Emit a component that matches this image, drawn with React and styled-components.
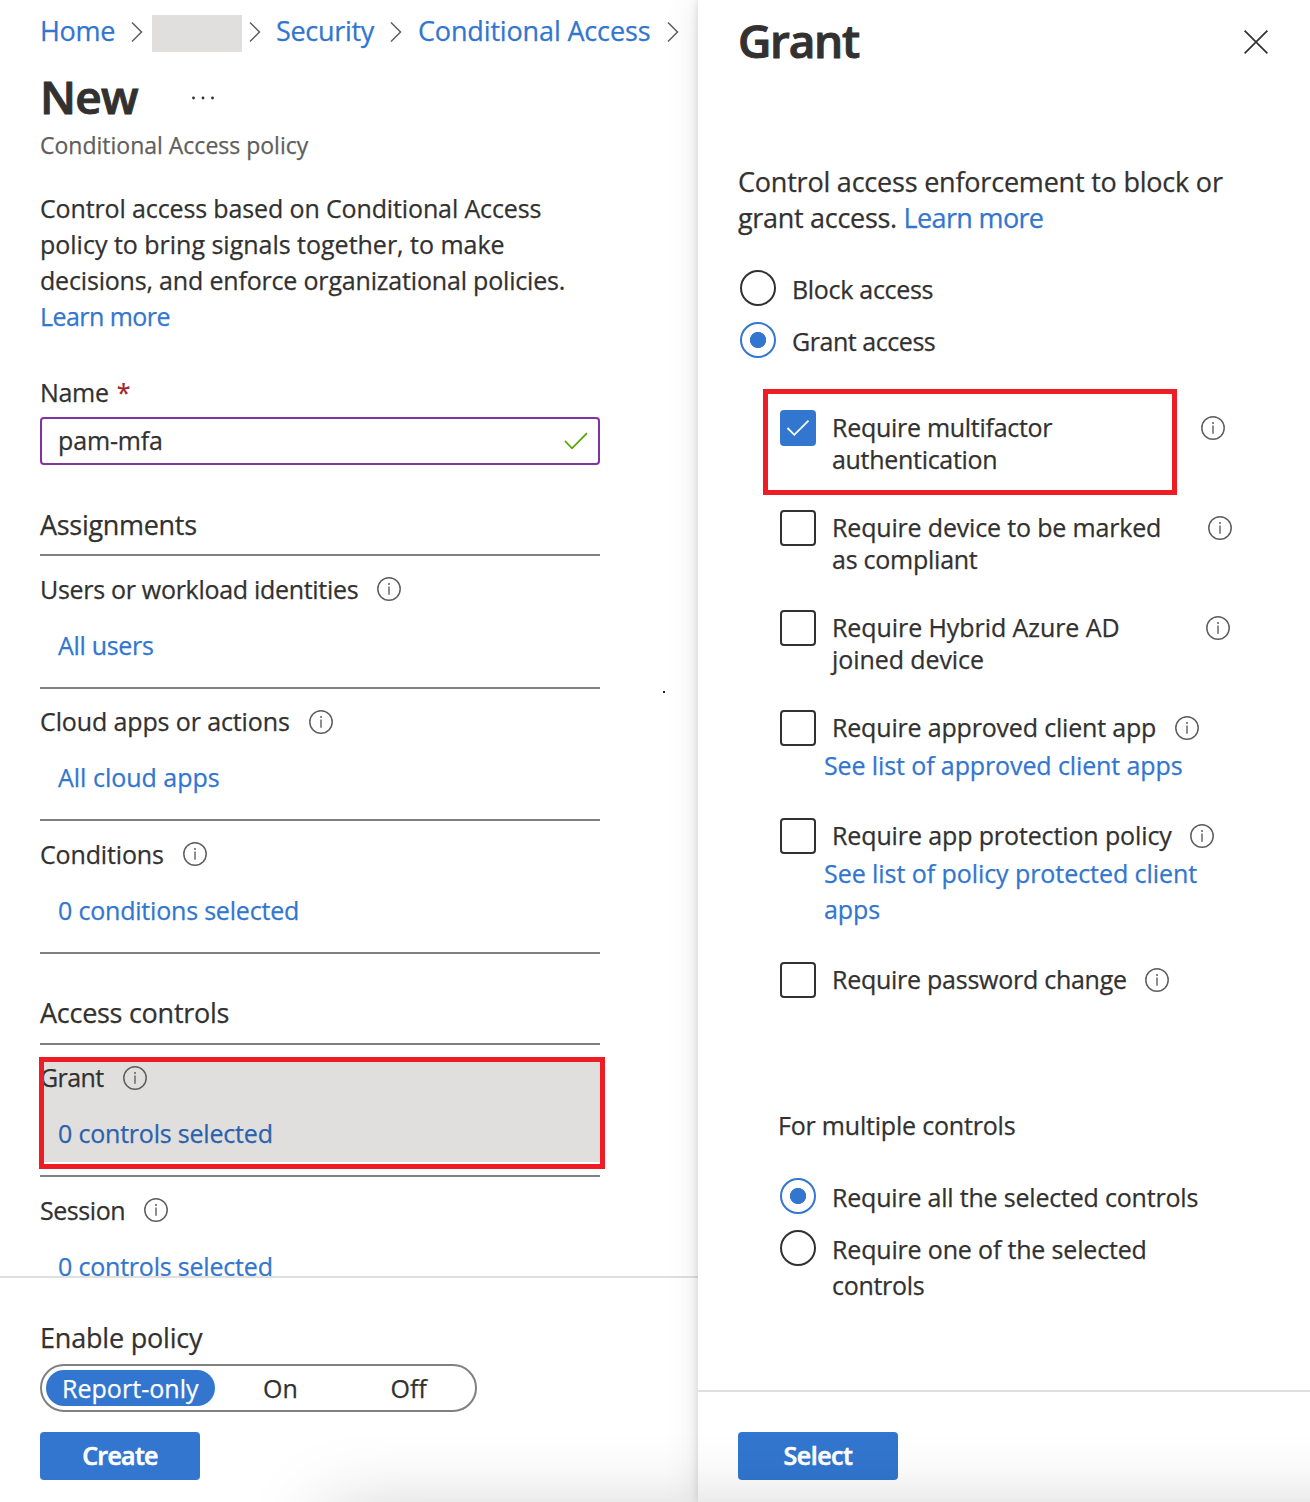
import React from "react";
import styled, { createGlobalStyle } from "styled-components";

const GlobalStyle = createGlobalStyle`
  * {
    box-sizing: border-box;
  }
  body {
    margin: 0;
    background: #fff;
    color: #323130;
    font-family: "Open Sans", "Noto Sans", sans-serif;
    font-size: 25px;
    line-height: 36px;
    -webkit-text-stroke: 0.25px currentColor;
  }
  svg {
    display: block;
    flex: none;
  }
`;

const Page = styled.div`
  position: relative;
  display: flex;
  width: 1310px;
  height: 1502px;
  overflow: hidden;
`;

const Blade = styled.main`
  display: flex;
  flex-direction: column;
  width: 698px;
`;

const BladeBody = styled.div`
  height: 1276px;
  padding: 0 0 0 40px;
  overflow: hidden;
`;

const Text = styled.span`
  letter-spacing: ${(p) => p.$ls || 0}px;
  white-space: pre;
`;

const Link = styled.a`
  margin-left: ${(p) => p.$indent || 0}px;
  color: ${(p) => (p.$dark ? "#2b62ad" : "#3276cf")};
  letter-spacing: ${(p) => p.$ls || 0}px;
  white-space: nowrap;
  text-decoration: none;
`;

const Breadcrumb = styled.nav`
  display: flex;
  height: 64px;
  font-size: 27px;
`;

const Crumb = styled.div`
  display: flex;
  align-items: center;
  width: ${(p) => p.$width}px;

  a {
    padding-bottom: 2px;
  }
`;

const Redacted = styled.div`
  width: 90px;
  height: 37px;
  margin: 3px 0 0 9px;
  background: #e1dfdd;
`;

const Chevron = styled.svg`
  margin-left: auto;
`;

const TitleRow = styled.div`
  display: flex;
  align-items: center;
  justify-content: space-between;
  width: 175px;
  height: 66px;
`;

const Title = styled.h1`
  margin: 0;
  padding-bottom: ${(p) => p.$lift}px;
  font-size: 46px;
  font-weight: 600;
  line-height: 62px;
  letter-spacing: ${(p) => p.$ls || 0}px;
  -webkit-text-stroke: 1px #323130;
`;

const Dots = styled.svg`
  margin-top: 2px;
`;

const Subtitle = styled.div`
  height: 36px;
  margin-top: -3px;
  color: #605e5c;
  font-size: 23px;
`;

const Intro = styled.p`
  margin: 27px 0 0;
`;

const Line = styled.div`
  display: flex;
  height: ${(p) => p.$height || 36}px;
  line-height: ${(p) => p.$height || 36}px;
`;

const FieldLabel = styled.div`
  margin-top: 40px;
  height: 43px;
`;

const Required = styled.span`
  margin-left: 8px;
  color: #a4262c;
`;

const Field = styled.div`
  display: flex;
  align-items: center;
  justify-content: space-between;
  width: 560px;
  height: 48px;
  padding: 0 10px 0 16px;
  border: 2px solid #8033a5;
  border-radius: 4px;

  span {
    padding-bottom: 2px;
  }
`;

const GroupTitle = styled.h2`
  display: flex;
  align-items: flex-end;
  width: 560px;
  height: 91px;
  margin: 0;
  padding-bottom: ${(p) => p.$bottom}px;
  border-bottom: 2px solid #808080;
  font-size: 27px;
  font-weight: 400;
`;

const Setting = styled.section`
  position: relative;
  width: 560px;
  height: ${(p) => (p.$short ? 132 : 133)}px;
  padding-top: 15px;
  border-bottom: 2px solid #808080;

  span {
    padding-bottom: ${(p) => (p.$short ? 2 : 0)}px;
  }
`;

const SettingLabel = styled.div`
  position: relative;
  display: flex;
  align-items: center;
  gap: 18px;
  height: 36px;
`;

const SettingLink = styled.div`
  position: relative;
  margin: ${(p) => (p.$short ? 19 : 20)}px 0 0 18px;
`;

const Hover = styled.div`
  position: absolute;
  top: 12px;
  left: 0;
  right: 0;
  height: 105px;
  background: #e1dfdd;
`;

const Marker = styled.div`
  position: absolute;
  top: ${(p) => p.$top}px;
  left: ${(p) => p.$left}px;
  width: ${(p) => p.$width}px;
  height: ${(p) => p.$height}px;
  border: 5px solid #ee1c25;
  pointer-events: none;
`;

const BladeFooter = styled.footer`
  height: 226px;
  padding: 42px 0 0 40px;
  border-top: 2px solid #dfdfdf;
`;

const FooterLabel = styled.div`
  height: 44px;
  font-size: 27px;
`;

const Toggle = styled.div`
  display: flex;
  width: 437px;
  height: 48px;
  margin-bottom: 20px;
  padding: 4px;
  border: 2px solid #808080;
  border-radius: 24px;
`;

const ToggleOption = styled.div`
  width: ${(p) => p.$width}px;
  border-radius: 18px;
  background: ${(p) => (p.$active ? "#3276cf" : "transparent")};
  color: ${(p) => (p.$active ? "#fff" : "#323130")};
  line-height: 37px;
  text-align: center;
`;

const Button = styled.button`
  display: block;
  width: 160px;
  height: 48px;
  padding: 0 0 2px;
  border: 0;
  border-radius: 4px;
  background: #3276cf;
  color: #fff;
  font: 600 25px/46px "Open Sans", "Noto Sans", sans-serif;
  letter-spacing: ${(p) => p.$ls || 0}px;
  -webkit-text-stroke: 0.6px #fff;
`;

const Panel = styled.aside`
  position: relative;
  display: flex;
  flex-direction: column;
  width: 612px;
  background: #fff;
  box-shadow: 0 0 32px rgba(0, 0, 0, 0.1), 0 0 8px rgba(0, 0, 0, 0.14);
`;

const PanelHeader = styled.header`
  display: flex;
  align-items: center;
  justify-content: space-between;
  height: 84px;
  padding: 0 42px 0 40px;
`;

const PanelBody = styled.div`
  height: 1306px;
  padding: 80px 0 0 40px;
`;

const PanelIntro = styled.div`
  margin-bottom: 34px;
  font-size: 27px;
`;

const RadioRow = styled.div`
  display: flex;
  gap: 16px;
  min-height: 52px;
  padding-left: 2px;
`;

const Radio = styled.span`
  flex: none;
  width: 36px;
  height: 36px;
  border: 2px solid ${(p) => (p.$checked ? "#3276cf" : "#323130")};
  border-radius: 50%;
  background: ${(p) =>
    p.$checked ? "radial-gradient(circle, #3276cf 7.7px, #fff 8.5px)" : "#fff"};
`;

const RadioLabel = styled.div`
  padding-top: 1px;
`;

const CheckList = styled.div`
  padding: 36px 0 0 42px;
`;

const CheckItem = styled.div`
  height: ${(p) => p.$height}px;
`;

const CheckRow = styled.div`
  display: flex;
`;

const Box = styled.span`
  display: flex;
  align-items: center;
  justify-content: center;
  flex: none;
  width: 36px;
  height: 36px;
  border: 2px solid ${(p) => (p.$checked ? "#3276cf" : "#323130")};
  border-radius: 4px;
  background: ${(p) => (p.$checked ? "#3276cf" : "#fff")};
`;

const CheckLabel = styled.div`
  width: ${(p) => p.$width}px;
  padding-top: 1px;
  margin-left: 16px;
`;

const InfoSlot = styled.div`
  padding-top: 5px;
`;

const ListLinks = styled.div`
  margin: 1px 0 0 44px;
`;

const Multiple = styled.div`
  padding: 37px 0 0 40px;
`;

const MultipleTitle = styled.div`
  height: 71px;
`;

const PanelFooter = styled.footer`
  height: 112px;
  padding: 40px 0 0 40px;
  border-top: 2px solid #dfdfdf;
`;

const Speck = styled.div`
  position: absolute;
  top: 691px;
  left: 663px;
  width: 2px;
  height: 2px;
  background: #222;
`;

const BottomShade = styled.div`
  position: absolute;
  top: 1514px;
  left: 325px;
  width: 1100px;
  height: 100px;
  box-shadow: 0 0 80px rgba(0, 0, 0, 0.21);
  pointer-events: none;
`;

function InfoIcon() {
  return (
    <svg width="26" height="26" viewBox="0 0 26 26" fill="none">
      <circle cx="13" cy="13" r="11.2" stroke="#605e5c" strokeWidth="1.5" />
      <path d="M13 10.5v8.3" stroke="#605e5c" strokeWidth="1.4" />
      <circle cx="13" cy="7.9" r="1" fill="#605e5c" />
    </svg>
  );
}

function Separator() {
  return (
    <Chevron width="12" height="22" viewBox="0 0 12 22" fill="none">
      <path d="M1 1.5l9.5 9.5L1 20.5" stroke="#605e5c" strokeWidth="1.5" />
    </Chevron>
  );
}

const assignments = [
  { label: "Users or workload identities", value: "All users", ls: [-0.3, -0.3] },
  { label: "Cloud apps or actions", value: "All cloud apps", ls: [-0.12, 0], short: true },
  { label: "Conditions", value: "0 conditions selected", ls: [-0.15, -0.2] },
];

const controls = [
  { label: "Grant", value: "0 controls selected", ls: [-0.6, -0.2], short: true, active: true },
  { label: "Session", value: "0 controls selected", ls: [-0.45, -0.2] },
];

const grants = [
  {
    lines: ["Require multifactor", "authentication"],
    ls: [-0.28, -0.3],
    info: 368,
    height: 100,
    checked: true,
  },
  {
    lines: ["Require device to be marked", "as compliant"],
    ls: [-0.17, -0.25],
    info: 375,
    height: 100,
  },
  {
    lines: ["Require Hybrid Azure AD", "joined device"],
    ls: [-0.08, -0.08],
    info: 373,
    height: 100,
  },
  {
    lines: ["Require approved client app"],
    ls: [-0.18],
    links: ["See list of approved client apps"],
    linkLs: -0.11,
    info: 342,
    height: 108,
  },
  {
    lines: ["Require app protection policy"],
    ls: [-0.12],
    links: ["See list of policy protected client", "apps"],
    linkLs: -0.06,
    info: 357,
    height: 144,
  },
  { lines: ["Require password change"], ls: [-0.26], info: 312, height: 108 },
];

function SettingRow({ item }) {
  return (
    <Setting $short={item.short}>
      {item.active && <Hover />}
      <SettingLabel>
        <Text $ls={item.ls[0]}>{item.label}</Text>
        <InfoIcon />
      </SettingLabel>
      <SettingLink $short={item.short}>
        <Link $dark={item.active} $ls={item.ls[1]}>{item.value}</Link>
      </SettingLink>
      {item.active && <Marker $top={12} $left={-1} $width={566} $height={112} />}
    </Setting>
  );
}

function GrantOption({ item }) {
  return (
    <CheckItem $height={item.height}>
      <CheckRow>
        <Box $checked={item.checked}>
          {item.checked && (
            <svg width="24" height="18" viewBox="0 0 24 18" fill="none">
              <path d="M1.5 9l6.8 6.8L22.5 1.6" stroke="#fff" strokeWidth="1.8" />
            </svg>
          )}
        </Box>
        <CheckLabel $width={item.info}>
          {item.lines.map((line, i) => (
            <Line key={line} $height={32}>
              <Text $ls={item.ls[i]}>{line}</Text>
            </Line>
          ))}
        </CheckLabel>
        <InfoSlot>
          <InfoIcon />
        </InfoSlot>
      </CheckRow>
      {item.links && (
        <ListLinks>
          {item.links.map((line) => (
            <Line key={line}>
              <Link $ls={item.linkLs}>{line}</Link>
            </Line>
          ))}
        </ListLinks>
      )}
    </CheckItem>
  );
}

function App() {
  return (
    <Page>
      <GlobalStyle />
      <Blade>
        <BladeBody>
          <Breadcrumb>
            <Crumb $width={103}>
              <Link $ls={-0.3}>Home</Link>
              <Separator />
            </Crumb>
            <Crumb $width={118}>
              <Redacted />
              <Separator />
            </Crumb>
            <Crumb $width={141}>
              <Link $indent={15} $ls={-0.3}>Security</Link>
              <Separator />
            </Crumb>
            <Crumb $width={277}>
              <Link $indent={16} $ls={-0.15}>Conditional Access</Link>
              <Separator />
            </Crumb>
          </Breadcrumb>
          <TitleRow>
            <Title $lift={2} $ls={-0.8}>New</Title>
            <Dots width="24" height="4" viewBox="0 0 24 4" fill="#323130">
              <circle cx="2.5" cy="2" r="1.4" />
              <circle cx="12" cy="2" r="1.4" />
              <circle cx="21.5" cy="2" r="1.4" />
            </Dots>
          </TitleRow>
          <Subtitle>
            <Text>Conditional Access policy</Text>
          </Subtitle>
          <Intro>
            <Line><Text $ls={-0.13}>Control access based on Conditional Access</Text></Line>
            <Line><Text $ls={-0.01}>policy to bring signals together, to make</Text></Line>
            <Line><Text $ls={-0.18}>decisions, and enforce organizational policies.</Text></Line>
            <Line><Link $ls={-0.55}>Learn more</Link></Line>
          </Intro>
          <FieldLabel>
            <Text $ls={-0.3}>Name</Text>
            <Required>*</Required>
          </FieldLabel>
          <Field>
            <Text $ls={-0.15}>pam-mfa</Text>
            <svg width="24" height="18" viewBox="0 0 24 18" fill="none">
              <path d="M1 9l7 7.3L23 1.2" stroke="#57a300" strokeWidth="1.8" />
            </svg>
          </Field>
          <GroupTitle $bottom={11}>
            <Text $ls={-0.3}>Assignments</Text>
          </GroupTitle>
          {assignments.map((item) => (
            <SettingRow key={item.label} item={item} />
          ))}
          <GroupTitle $bottom={12}>
            <Text $ls={-0.27}>Access controls</Text>
          </GroupTitle>
          {controls.map((item) => (
            <SettingRow key={item.label} item={item} />
          ))}
        </BladeBody>
        <BladeFooter>
          <FooterLabel>
            <Text $ls={-0.2}>Enable policy</Text>
          </FooterLabel>
          <Toggle>
            <ToggleOption $active $width={169}>
              <Text $ls={0.05}>Report-only</Text>
            </ToggleOption>
            <ToggleOption $width={132}>On</ToggleOption>
            <ToggleOption $width={125}>Off</ToggleOption>
          </Toggle>
          <Button $ls={-0.7}>Create</Button>
        </BladeFooter>
      </Blade>

      <Panel>
        <PanelHeader>
          <Title $lift={4} $ls={-1.3}>Grant</Title>
          <svg width="24" height="24" viewBox="0 0 24 24" fill="none">
            <path d="M.6.6l22.8 22.8M23.4.6L.6 23.4" stroke="#323130" strokeWidth="1.7" />
          </svg>
        </PanelHeader>
        <PanelBody>
          <PanelIntro>
            <Line><Text $ls={-0.21}>Control access enforcement to block or</Text></Line>
            <Line>
              <Text $ls={-0.3}>grant access. </Text>
              <Link $ls={-0.65}>Learn more</Link>
            </Line>
          </PanelIntro>
          <RadioRow>
            <Radio />
            <RadioLabel><Text $ls={-0.3}>Block access</Text></RadioLabel>
          </RadioRow>
          <RadioRow>
            <Radio $checked />
            <RadioLabel><Text $ls={-0.45}>Grant access</Text></RadioLabel>
          </RadioRow>
          <CheckList>
            {grants.map((item) => (
              <GrantOption key={item.lines[0]} item={item} />
            ))}
          </CheckList>
          <Multiple>
            <MultipleTitle>
              <Text $ls={-0.2}>For multiple controls</Text>
            </MultipleTitle>
            <RadioRow>
              <Radio $checked />
              <RadioLabel><Text $ls={-0.2}>Require all the selected controls</Text></RadioLabel>
            </RadioRow>
            <RadioRow>
              <Radio />
              <RadioLabel>
                <Line><Text $ls={-0.17}>Require one of the selected</Text></Line>
                <Line><Text $ls={-0.3}>controls</Text></Line>
              </RadioLabel>
            </RadioRow>
          </Multiple>
        </PanelBody>
        <PanelFooter>
          <Button $ls={-0.5}>Select</Button>
        </PanelFooter>
        <Marker $top={389} $left={65} $width={414} $height={106} />
      </Panel>
      <Speck />
      <BottomShade />
    </Page>
  );
}

export default App;
